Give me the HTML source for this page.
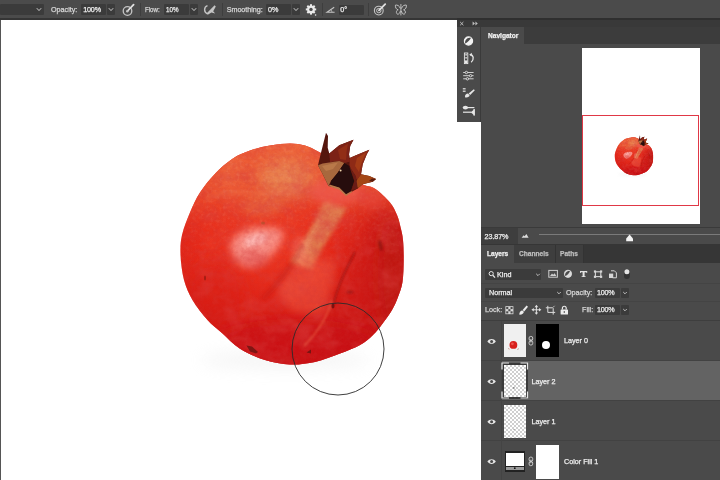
<!DOCTYPE html>
<html><head><meta charset="utf-8"><title>Photoshop</title>
<style>
*{margin:0;padding:0;box-sizing:border-box}
html,body{width:720px;height:480px;overflow:hidden;background:#fff}
body{position:relative;font-family:"Liberation Sans",sans-serif;color:#ddd;font-size:7.2px;-webkit-font-smoothing:antialiased}
.a{position:absolute}
.t{position:absolute;white-space:nowrap;line-height:10px;height:10px;color:#d6d6d6}
.f{position:absolute;background:#3b3b3b;border-radius:1px}
.ck{background-color:#fff;background-image:conic-gradient(#cfcfcf 25%,#fff 0 50%,#cfcfcf 0 75%,#fff 0);background-size:4px 4px}
.b{font-weight:bold;font-size:6.6px;-webkit-text-stroke:0}
.t{-webkit-text-stroke:.25px currentColor}
#root{position:absolute;left:0;top:0;width:720px;height:480px;will-change:transform;transform:translateZ(0)}
</style></head><body><div id="root">

<!-- canvas -->
<div class="a" id="canvas" style="left:0;top:20px;width:481px;height:460px;background:#fff"></div>
<div class="a" style="left:0;top:20px;width:1px;height:460px;background:#555"></div>

<!-- pomegranate -->
<svg class="a" id="fruit" style="left:0;top:0" width="481" height="480" viewBox="0 0 481 480">
<defs>
<radialGradient id="gb" cx="262" cy="235" r="160" gradientUnits="userSpaceOnUse">
<stop offset="0" stop-color="#ee3c24"/><stop offset=".4" stop-color="#e62a1a"/><stop offset=".75" stop-color="#d41e16"/><stop offset="1" stop-color="#c01412"/>
</radialGradient>
<linearGradient id="gv" x1="0" y1="143" x2="0" y2="365" gradientUnits="userSpaceOnUse">
<stop offset="0" stop-color="#f0683c" stop-opacity=".95"/><stop offset=".22" stop-color="#ee5a34" stop-opacity=".75"/><stop offset=".45" stop-color="#e63020" stop-opacity="0"/><stop offset=".7" stop-color="#d41a16" stop-opacity=".35"/><stop offset="1" stop-color="#c81212" stop-opacity=".75"/>
</linearGradient>
<filter id="bl05" x="-20%" y="-20%" width="140%" height="140%"><feGaussianBlur stdDeviation=".55"/></filter>
<filter id="bl1" x="-50%" y="-50%" width="200%" height="200%"><feGaussianBlur stdDeviation="1"/></filter>
<filter id="bl2" x="-50%" y="-50%" width="200%" height="200%"><feGaussianBlur stdDeviation="2"/></filter>
<filter id="bl4" x="-50%" y="-50%" width="200%" height="200%"><feGaussianBlur stdDeviation="4"/></filter>
<filter id="bl8" x="-100%" y="-100%" width="300%" height="300%"><feGaussianBlur stdDeviation="8"/></filter>
<filter id="tex" x="0" y="0" width="100%" height="100%"><feTurbulence type="fractalNoise" baseFrequency=".22" numOctaves="3" seed="7" result="n"/><feColorMatrix in="n" type="matrix" values="0 0 0 0 .62  0 0 0 0 .04  0 0 0 0 .04  1.6 0 0 0 -.62"/></filter>
<filter id="tex3" x="0" y="0" width="100%" height="100%"><feTurbulence type="fractalNoise" baseFrequency=".045 .06" numOctaves="3" seed="11" result="n"/><feColorMatrix in="n" type="matrix" values="0 0 0 0 .7  0 0 0 0 .05  0 0 0 0 .05  0 0 2.4 0 -1.05"/></filter>
<filter id="tex4" x="0" y="0" width="100%" height="100%"><feTurbulence type="fractalNoise" baseFrequency=".05 .04" numOctaves="3" seed="23" result="n"/><feColorMatrix in="n" type="matrix" values="0 0 0 0 1  0 0 0 0 .5  0 0 0 0 .36  2.4 0 0 0 -1.1"/></filter>
<filter id="tex2" x="0" y="0" width="100%" height="100%"><feTurbulence type="fractalNoise" baseFrequency=".3" numOctaves="2" seed="3" result="n"/><feColorMatrix in="n" type="matrix" values="0 0 0 0 1  0 0 0 0 .75  0 0 0 0 .55  0 1.8 0 0 -.82"/></filter>
<linearGradient id="mg" x1="0" y1="138" x2="0" y2="290" gradientUnits="userSpaceOnUse"><stop offset="0" stop-color="#fff"/><stop offset=".5" stop-color="#fff" stop-opacity=".8"/><stop offset="1" stop-color="#fff" stop-opacity="0"/></linearGradient><mask id="mk" maskUnits="userSpaceOnUse" x="170" y="130" width="250" height="250"><rect x="170" y="130" width="250" height="250" fill="url(#mg)"/></mask>
<clipPath id="cb"><path id="bp" d="M290.0,143.5 C295.8,143.5 300.3,144.2 305.0,145.5 C309.7,146.8 313.5,149.1 318.0,151.5 C322.5,153.9 327.0,156.6 332.0,160.0 C337.0,163.4 343.0,168.0 348.0,172.0 C353.0,176.0 357.5,181.2 362.0,184.0 C366.5,186.8 370.3,185.6 375.0,188.7 C379.7,191.8 386.3,198.1 390.0,202.5 C393.7,206.9 395.2,210.9 397.0,215.0 C398.8,219.1 399.5,222.8 400.5,227.0 C401.5,231.2 402.5,234.5 403.0,240.0 C403.5,245.5 403.8,253.0 403.7,260.0 C403.6,267.0 403.4,275.8 402.5,282.0 C401.6,288.2 399.8,292.3 398.0,297.0 C396.2,301.7 394.5,305.7 392.0,310.0 C389.5,314.3 386.2,318.8 383.0,323.0 C379.8,327.2 376.8,331.3 373.0,335.0 C369.2,338.7 365.5,341.9 360.0,345.0 C354.5,348.1 347.5,350.7 340.0,353.5 C332.5,356.3 323.3,360.2 315.0,362.0 C306.7,363.8 298.3,364.8 290.0,364.5 C281.7,364.2 273.3,362.6 265.0,360.0 C256.7,357.4 247.2,353.2 240.0,348.7 C232.8,344.2 227.4,337.8 222.0,333.0 C216.6,328.2 212.4,325.5 207.5,320.0 C202.6,314.5 196.4,306.7 192.5,300.0 C188.6,293.3 186.0,287.5 184.0,280.0 C182.0,272.5 180.8,262.5 180.5,255.0 C180.2,247.5 180.4,242.1 182.0,235.0 C183.6,227.9 187.0,219.6 190.0,212.5 C193.0,205.4 195.8,199.0 200.0,192.5 C204.2,186.0 209.6,179.3 215.0,173.7 C220.4,168.1 226.7,162.6 232.5,158.7 C238.3,154.8 243.8,152.7 250.0,150.5 C256.2,148.3 263.3,146.7 270.0,145.5 C276.7,144.3 284.2,143.5 290.0,143.5Z"/></clipPath>
</defs>
<g id="pom">
<!-- soft shadow -->
<ellipse cx="285" cy="360" rx="85" ry="9" fill="#d8d8d8" opacity=".25" filter="url(#bl8)"/>
<use href="#bp" fill="url(#gb)"/>
<g clip-path="url(#cb)">
<rect x="170" y="130" width="250" height="250" fill="url(#gv)"/>
<!-- tan/yellow top patches -->
<ellipse cx="286" cy="178" rx="30" ry="20" fill="#e89058" opacity=".75" filter="url(#bl8)"/>
<ellipse cx="232" cy="178" rx="20" ry="16" fill="#ec6a40" opacity=".5" filter="url(#bl8)"/>
<ellipse cx="262" cy="206" rx="22" ry="10" fill="#e88450" opacity=".45" filter="url(#bl4)"/>
<!-- tan stripe below crown -->
<path d="M324,200 C317,220 304,240 290,262 L311,270 C322,246 337,226 347,208Z" fill="#e08a56" opacity=".85" filter="url(#bl2)"/><path d="M322,215 C314,232 306,246 297,260" stroke="#f0a070" stroke-width="3" fill="none" opacity=".6" filter="url(#bl2)"/>
<path d="M302,254 L336,262 L330,298 L322,318 L292,312 L276,294Z" fill="#f2604a" opacity=".5" filter="url(#bl4)"/>
<!-- highlight -->
<path d="M231,242 C238,228 262,224 282,230 C288,240 270,262 250,268 C236,264 228,254 231,242Z" fill="#fca8a0" opacity=".8" filter="url(#bl4)"/>
<ellipse cx="256" cy="240" rx="12" ry="6" fill="#ffd0d0" opacity=".6" filter="url(#bl2)" transform="rotate(-20 256 240)"/>
<ellipse cx="300" cy="250" rx="8" ry="14" fill="#fa8a78" opacity=".5" filter="url(#bl4)"/>
<!-- dark right side and bottom -->
<path d="M352,250 C346,275 336,300 330,330 L345,352 L400,320 L410,240 L380,200Z" fill="#c81814" opacity=".5" filter="url(#bl8)"/>
<ellipse cx="392" cy="275" rx="14" ry="60" fill="#b41210" opacity=".5" filter="url(#bl8)"/>
<ellipse cx="295" cy="345" rx="90" ry="26" fill="#c80e12" opacity=".55" filter="url(#bl8)"/>
<ellipse cx="215" cy="300" rx="30" ry="40" fill="#d81c18" opacity=".4" filter="url(#bl8)"/>
<!-- texture -->
<rect x="175" y="138" width="235" height="232" filter="url(#tex3)" opacity=".5"/>
<rect x="175" y="138" width="235" height="232" filter="url(#tex4)" opacity=".06"/>
<rect x="175" y="138" width="235" height="232" filter="url(#tex)" opacity=".3"/>
<g mask="url(#mk)"><rect x="175" y="138" width="235" height="160" filter="url(#tex2)" opacity=".15"/></g>
<!-- crack lines -->
<path d="M355,252 C347,268 338,284 333,306" stroke="#98100e" stroke-width="1.8" fill="none" opacity=".75" filter="url(#bl1)"/>
<path d="M303,245 C294,262 280,282 263,299" stroke="#b41412" stroke-width="3" fill="none" opacity=".5" filter="url(#bl2)"/><path d="M332,300 C328,315 318,332 304,346" stroke="#ee6a4a" stroke-width="2" fill="none" opacity=".5" filter="url(#bl1)"/>
<path d="M205,200 C230,185 262,200 300,190" stroke="#f08a60" stroke-width="3" fill="none" opacity=".35" filter="url(#bl2)"/>
<!-- spots -->
<path d="M246.500,345.500 L252,346.500 L258,352 L256,353.500 L250,351.500Z" fill="#701410" opacity=".85"/>
<path d="M306.500,352.500 L311,349.500 L311,353.500Z" fill="#6a1410" opacity=".85"/>
<ellipse cx="380.500" cy="245.500" rx="1.800" ry="5.500" fill="#8a1210" opacity=".75" transform="rotate(-12 380.500 245.500)" filter="url(#bl1)"/>
<ellipse cx="350" cy="292" rx="3.500" ry="1.500" fill="#8a1210" opacity=".6" filter="url(#bl1)"/>
<ellipse cx="333" cy="306" rx="1.500" ry="2.500" fill="#6a0e0e" opacity=".8"/>
<ellipse cx="205" cy="278" rx="1" ry="2.500" fill="#8a1a10" opacity=".7"/>
<ellipse cx="263" cy="223" rx="2" ry="1.500" fill="#a8502c" opacity=".6"/>
<!-- crown base shading -->
<ellipse cx="336" cy="192" rx="26" ry="14" fill="#ee5a50" opacity=".7" filter="url(#bl4)"/>
<ellipse cx="372" cy="200" rx="14" ry="10" fill="#e84a40" opacity=".5" filter="url(#bl4)"/>
</g>
<!-- crown -->
<g filter="url(#bl05)">
<path d="M318,165.200 L320.200,156 L323.500,142.700 L326,132.700 L328,136 L327.700,147.700 L329.300,153.500 L339.300,145.200 L353.500,139.700 L350.200,146 L349,154.300 L349.700,158 L356,155.200 L369.300,149.700 L366.800,154.300 L362.700,164.300 L361,174.300 L369.300,176 L376,179 L372.700,181.800 L362.700,184.300 L357.700,188.500 L351.800,191.800 L346,195.200 L339.300,188.500 L328.500,186 L322.700,174.300Z" fill="#541610"/>
<path d="M329.300,153.500 L339.300,145.200 L353.500,139.700 L350.200,146 L349,154.300 L349.700,161.800 L344.300,163 L339.300,161 L330,162Z" fill="#7c2416"/>
<path d="M338,150 L348,143.500 L346.500,152 L346,160 L340,159Z" fill="#96301a" opacity=".8"/>
<path d="M349.700,158 L356,155.200 L369.300,149.700 L366.800,154.300 L362.700,164.300 L361,174.300 L357,180 L352,172 L349.500,165Z" fill="#8e2c16"/>
<path d="M357,158 L366,152.500 L361.500,163 L359,172 L355,166Z" fill="#aa3e1a" opacity=".8"/>
<path d="M361,174.300 L369.300,176 L376,179 L372.700,181.800 L362.700,184.300 L357.700,188.500 L355.500,182Z" fill="#a44618"/>
<path d="M372,178.500 L376,179 L372.700,181.800 L369,181Z" fill="#5a1a10"/>
<path d="M318,165.200 L322.700,163.500 L339.300,161 L344.300,163 L337.700,172.700 L331,181 L328.500,186 L322.700,174.300Z" fill="#a8683e"/>
<path d="M322,166 L338,162.500 L333,169 L326,171Z" fill="#c08050" opacity=".7"/>
<path d="M344.300,163 L349.300,166 L354.300,181 L351,191 L346,194.300 L339.300,187.700 L330.200,185.200 L331,181 L337.700,172.700Z" fill="#260a08"/>
<path d="M349.300,166 L356,176 L357.700,188.500 L351,191 L354.300,181Z" fill="#6a1c12"/>
<path d="M328.500,186 L330.200,184.800 L339.300,187.600 L346,194.200 L351.800,191 L351.800,192.200 L346,196 L339,189.500Z" fill="#b8784a"/>
<circle cx="340.600" cy="170.400" r="1" fill="#f0d8b0"/>
</g>
</g>
<!-- brush cursor -->
<circle cx="338" cy="349" r="46" fill="none" stroke="#2a2a2a" stroke-width="0.9"/>
</svg>

<!-- top options bar -->
<div class="a" style="left:0;top:0;width:720px;height:20px;background:#4b4b4b"></div>
<div class="a" style="left:0;top:18px;width:720px;height:2px;background:#353535"></div>
<div id="opts">
<div class="f" style="left:0;top:4px;width:44px;height:11px"></div>
<svg class="a" style="left:36px;top:7px" width="6" height="5" viewBox="0 0 6 5"><path d="M0.8,1.2 L3,3.6 L5.2,1.2" stroke="#ccc" stroke-width="1" fill="none"/></svg>
<div class="t" style="left:51px;top:5px">Opacity:</div>
<div class="f" style="left:81px;top:4px;width:25px;height:11px"></div>
<div class="t" style="left:83.3px;top:5px;color:#eee;letter-spacing:-.22px">100%</div>
<div class="f" style="left:107px;top:4px;width:8px;height:11px"></div>
<svg class="a" style="left:108px;top:7px" width="6" height="5" viewBox="0 0 6 5"><path d="M0.8,1.2 L3,3.6 L5.2,1.2" stroke="#ccc" stroke-width="1" fill="none"/></svg>
<div class="t" style="left:144.7px;top:5px;transform:scaleX(.85);transform-origin:0 0">Flow:</div>
<div class="f" style="left:164px;top:4px;width:25px;height:11px"></div>
<div class="t" style="left:165.8px;top:5px;color:#eee;transform:scaleX(.87);transform-origin:0 0">10%</div>
<div class="f" style="left:190px;top:4px;width:8px;height:11px"></div>
<svg class="a" style="left:191px;top:7px" width="6" height="5" viewBox="0 0 6 5"><path d="M0.8,1.2 L3,3.6 L5.2,1.2" stroke="#ccc" stroke-width="1" fill="none"/></svg>
<div class="t" style="left:226.7px;top:5px;letter-spacing:-.04px">Smoothing:</div>
<div class="f" style="left:266px;top:4px;width:25px;height:11px"></div>
<div class="t" style="left:268px;top:5px;color:#eee">0%</div>
<div class="f" style="left:292px;top:4px;width:8px;height:11px"></div>
<svg class="a" style="left:293px;top:7px" width="6" height="5" viewBox="0 0 6 5"><path d="M0.8,1.2 L3,3.6 L5.2,1.2" stroke="#ccc" stroke-width="1" fill="none"/></svg>
<div class="f" style="left:339px;top:5px;width:25px;height:10px"></div>
<div class="t" style="left:340.2px;top:5px;color:#eee">0°</div>
</div>

<!-- right dock -->
<div class="a" style="left:457px;top:18px;width:263px;height:2px;background:#2f2f2f"></div><div class="a" style="left:457px;top:20px;width:263px;height:7px;background:#393939"></div>
<div class="a" style="left:457px;top:27px;width:24px;height:95px;background:#4a4a4a"></div>
<div class="a" style="left:481px;top:27px;width:239px;height:453px;background:#4a4a4a"></div>
<div class="a" style="left:480px;top:27px;width:1px;height:95px;background:#3a3a3a"></div>
<!-- navigator tab bar -->
<div class="a" style="left:524px;top:27px;width:196px;height:17px;background:#3c3c3c"></div>
<div class="t b" style="left:488px;top:31px;color:#f0f0f0">Navigator</div>
<!-- navigator preview -->
<div class="a" style="left:582px;top:48px;width:118px;height:176px;background:#fff"></div>
<svg class="a" style="left:582px;top:48px" width="118" height="176" viewBox="582 48 118 176"><use href="#pom" transform="translate(583.7,112.65) scale(.172)"/></svg>
<div class="a" style="left:582px;top:115px;width:117px;height:91px;border:1.2px solid #e03846"></div>

<!-- zoom bar -->
<div class="a" style="left:481px;top:227px;width:239px;height:1px;background:#3a3a3a"></div>
<div class="a" style="left:481px;top:228px;width:37px;height:16px;background:#3e3e3e"></div>
<div class="t" style="left:484.6px;top:232px;color:#eee;letter-spacing:-.1px">23.87%</div>
<div class="a" style="left:539px;top:233.5px;width:181px;height:1px;background:#7a7a7a"></div>
<!-- layers tab bar -->
<div class="a" style="left:481px;top:244px;width:239px;height:19px;background:#363636"></div><div class="a" style="left:514px;top:245px;width:69px;height:18px;background:#3e3e3e"></div><div class="a" style="left:554.5px;top:245px;width:1px;height:18px;background:#333"></div><div class="a" style="left:583px;top:245px;width:1px;height:18px;background:#333"></div>
<div class="a" style="left:481px;top:245px;width:33px;height:18px;background:#4a4a4a"></div>
<div class="t b" style="left:487px;top:249px;color:#f0f0f0">Layers</div>
<div class="t b" style="left:519px;top:249px;color:#bdbdbd">Channels</div>
<div class="t b" style="left:560px;top:249px;color:#bdbdbd">Paths</div>
<!-- kind row -->
<div class="f" style="left:485px;top:269px;width:56px;height:11px"></div>
<div class="t" style="left:497px;top:270px;color:#eee">Kind</div>
<div class="a" style="left:481px;top:283px;width:239px;height:1px;background:#444"></div>
<div class="f" style="left:485px;top:288px;width:78px;height:10px"></div>
<div class="t" style="left:489px;top:288px;color:#eee">Normal</div>
<div class="t" style="left:566px;top:288px">Opacity:</div>
<div class="f" style="left:595px;top:288px;width:25px;height:10px"></div>
<div class="t" style="left:597px;top:288px;color:#eee;letter-spacing:-.22px">100%</div>
<div class="f" style="left:621px;top:288px;width:8px;height:10px"></div>
<div class="a" style="left:481px;top:301px;width:239px;height:1px;background:#444"></div>
<div class="t" style="left:485px;top:305px">Lock:</div>
<div class="t" style="left:582px;top:305px">Fill:</div>
<div class="f" style="left:595px;top:305px;width:25px;height:10px"></div>
<div class="t" style="left:597px;top:305px;color:#eee;letter-spacing:-.22px">100%</div>
<div class="f" style="left:621px;top:305px;width:8px;height:10px"></div>

<!-- layers -->
<div class="a" style="left:481px;top:320px;width:239px;height:1px;background:#3e3e3e"></div>
<div class="a" style="left:501px;top:361px;width:219px;height:39px;background:#636363"></div>
<div class="a" style="left:481px;top:360px;width:239px;height:1px;background:#424242"></div>
<div class="a" style="left:481px;top:400px;width:239px;height:1px;background:#424242"></div>
<div class="a" style="left:481px;top:440px;width:239px;height:1px;background:#424242"></div>
<div class="a" style="left:501px;top:321px;width:1px;height:159px;background:#444"></div>
<!-- layer 0 -->
<div class="a" style="left:503.5px;top:323.7px;width:22.6px;height:33.8px;background:#f0f0f0"></div>
<div class="a" style="left:536.3px;top:323.7px;width:22.5px;height:33.8px;background:#000"></div>
<div class="a" style="left:542.3px;top:341px;width:7.8px;height:7.8px;border-radius:50%;background:#fff"></div>
<div class="t" style="left:564px;top:336px;color:#eee">Layer 0</div>
<!-- layer 2 -->
<div class="a" style="left:501.5px;top:362.5px;width:26.5px;height:36px;background:#3a3a3a"></div><div class="a ck" style="left:503.5px;top:364.5px;width:22.5px;height:32.5px"></div>
<div class="t" style="left:531.5px;top:376.5px;color:#eee">Layer 2</div>
<!-- layer 1 -->
<div class="a ck" style="left:503.5px;top:405px;width:22.5px;height:33px"></div>
<div class="t" style="left:531.5px;top:416.5px;color:#eee">Layer 1</div>
<!-- color fill -->
<div class="a" style="left:504.5px;top:451px;width:20.5px;height:20.5px;background:#222"></div>
<div class="a" style="left:506px;top:452.5px;width:17.5px;height:13px;background:#fff"></div>
<div class="a" style="left:506px;top:466.5px;width:17.5px;height:3.5px;background:#9a9a9a"></div>
<div class="a" style="left:536px;top:445px;width:23px;height:33.5px;background:#fff"></div>
<div class="t" style="left:564px;top:456.5px;color:#eee">Color Fill 1</div>


<!-- ICONS -->
<svg class="a" id="icons" style="left:0;top:0;pointer-events:none" width="720" height="480" viewBox="0 0 720 480">
<g fill="none" stroke="#c4c4c4" stroke-width="1">
<!-- separators in options bar -->
<g stroke="#3e3e3e" stroke-width="1"><path d="M140.5,3V16M222.5,3V16M322.5,3V16M368.5,3V16"/></g>
<!-- pressure opacity -->
<circle cx="127.5" cy="11" r="4.3" stroke-width="1.3"/>
<path d="M127.5,11 L133.6,4.6" stroke="#e0e0e0" stroke-width="1.8" stroke-linecap="round"/>
<circle cx="127.3" cy="11.2" r="1.2" fill="#c4c4c4" stroke="none"/>
<!-- airbrush -->
<path d="M207.5,5.6 C203.6,7 203.6,12.6 207.8,14" stroke-width="1.4"/>
<path d="M206.5,13.6 L214.6,5.2 L215.8,6.6 L213.2,11.2 L215.2,13.4 L211.4,12.6 L208.2,14.6Z" fill="#c4c4c4" stroke="none"/>
<!-- gear -->
<g stroke="none" fill="#eaeaea"><circle cx="311" cy="9.4" r="3.9"/>
<g id="teeth"><rect x="310" y="4.2" width="2" height="10.4"/><rect x="305.8" y="8.4" width="10.4" height="2"/></g>
<use href="#teeth" transform="rotate(45 311 9.4)"/>
<circle cx="311" cy="9.4" r="1.7" fill="#4b4b4b"/>
<circle cx="315.6" cy="15" r=".8"/></g>
<!-- angle -->
<path d="M334.2,7.2 L327,12.2 H334.6" stroke-width="1.1"/><path d="M330.6,9.6 C331.6,10.4 331.9,11.2 331.9,12.2" stroke-width=".9"/>
<!-- pressure size -->
<circle cx="378.8" cy="10.6" r="4.4" stroke-width="1.1"/><circle cx="378.8" cy="10.6" r="2.2" stroke-width="1"/>
<path d="M379,10.4 L385.2,4.2" stroke="#e0e0e0" stroke-width="1.8" stroke-linecap="round"/>
<!-- butterfly -->
<path d="M400.9,4V15.4" stroke-width=".9"/>
<path d="M400.4,8.6 C399.6,5.6 396.8,4.6 395.4,5.2 C395.2,7.4 396.2,9.4 398.2,9.8 C396,10.2 395.8,13.4 397.6,14.2 C399.2,14.2 400.2,12.6 400.4,10.8" stroke-width="1"/>
<path d="M401.4,8.6 C402.2,5.6 405,4.6 406.4,5.2 C406.6,7.4 405.6,9.4 403.6,9.8 C405.8,10.2 406,13.4 404.2,14.2 C402.6,14.2 401.6,12.6 401.4,10.8" stroke-width="1"/>
</g>
<!-- dock header -->
<g stroke="#bdbdbd" stroke-width="1" fill="none"><path d="M460.2,22 L463.4,25.2 M463.4,22 L460.2,25.2"/></g>
<g fill="#bdbdbd"><path d="M472.6,21.6 L475,23.6 L472.6,25.6Z M475.4,21.6 L477.8,23.6 L475.4,25.6Z"/></g>
<!-- tool strip icons -->
<g>
<circle cx="468.5" cy="41" r="4.1" fill="#f2f2f2" stroke="#f2f2f2" stroke-width="1.2"/>
<path d="M465.2,43.4 C464.4,40.4 467,36.8 471,37.8 C470,40 467.6,42.6 465.2,43.4Z" fill="#4a4a4a"/>
<!-- history -->
<g fill="#e8e8e8"><rect x="464.4" y="53" width="3.4" height="10.6" fill="none" stroke="#e8e8e8" stroke-width=".9"/><rect x="465" y="60.4" width="2.4" height="2.6"/><rect x="465.2" y="54" width="2" height="1.6" fill="#bbb"/><rect x="465.2" y="57" width="2" height="1.6" fill="#bbb"/></g>
<path d="M470,54.6 C473.6,54.6 474.4,59.6 471.2,62.2" fill="none" stroke="#e8e8e8" stroke-width="1.3"/><path d="M469.2,54.8 L471.8,52.8 L471.8,56.6Z" fill="#e8e8e8"/>
<!-- sliders -->
<g stroke="#e0e0e0" stroke-width=".9" fill="#4a4a4a"><path d="M463.2,72.5H473.6M463.2,75.7H473.6M463.2,78.8H473.6"/><circle cx="466.4" cy="72.5" r="1.2"/><circle cx="470.6" cy="75.7" r="1.2"/><circle cx="467.4" cy="78.8" r="1.2"/></g>
<!-- brush settings -->
<g fill="#e6e6e6"><path d="M465,97.2 C464.8,95 466.2,93.6 468,93.6 L469.6,95.2 C469.4,96.8 467.4,97.8 465,97.2Z"/><path d="M468.6,93.4 L473.8,89.2 L474.8,90.2 L470.2,95Z"/>
<rect x="462.8" y="88" width="2.8" height=".8"/><rect x="462.8" y="89.6" width="2.8" height=".8"/><rect x="462.8" y="91.2" width="2.8" height=".8"/></g>
<!-- brushes -->
<g fill="#e6e6e6"><ellipse cx="465.4" cy="107.6" rx="2.6" ry="1.9"/><rect x="467" y="107" width="7.4" height="1.2"/>
<rect x="463" y="111.6" width="8" height="1.2"/><path d="M470.6,112.2 L474.6,109.2 V115.4Z"/><rect x="473.4" y="109" width="1.4" height="6.6"/></g>
</g>
<!-- zoom bar -->
<path d="M521.6,237.8 H528.6 L526.4,234 L524.6,236.2 L523.6,235.2 Z" fill="#dcdcdc"/>
<path d="M629.6,234.6 L633,238.4 V241.2 H626.2 V238.4Z" fill="#f4f4f4"/>
<!-- kind row -->
<g fill="none" stroke="#e6e6e6"><circle cx="491.2" cy="273.6" r="2.1" stroke-width="1"/><path d="M492.8,275.2 L495,277.6" stroke-width="1.3"/>
<path d="M536.2,273.8 L538,275.6 L539.8,273.8" stroke="#ccc" stroke-width=".9"/></g>
<g>
<rect x="548.8" y="270.4" width="8.6" height="6.8" fill="none" stroke="#cfcfcf" stroke-width="1"/><path d="M550,276 L552,273.4 L553.2,274.8 L554.6,273.2 L556.4,276Z" fill="#cfcfcf"/>
<circle cx="568" cy="273.8" r="3.6" fill="#dcdcdc" stroke="#dcdcdc" stroke-width=".9"/><path d="M565.2,276 C564.4,273.4 566.6,270.4 570,271 C569.4,273.2 567.4,275.4 565.2,276Z" fill="#4a4a4a"/>
<path d="M580,271 H587.2 V273 H586.4 V272.2 H584.6 V276.2 H585.6 V277.1 H581.6 V276.2 H582.6 V272.2 H580.8 V273 H580Z" fill="#e2e2e2"/>
<rect x="595.4" y="271.8" width="5.4" height="4.8" fill="none" stroke="#d6d6d6" stroke-width="1.1"/><g fill="#d6d6d6"><rect x="593.9" y="270.4" width="2.2" height="2.2"/><rect x="600" y="270.4" width="2.2" height="2.2"/><rect x="593.9" y="275.7" width="2.2" height="2.2"/><rect x="600" y="275.7" width="2.2" height="2.2"/></g>
<path d="M611,270.8 H614.4 L616.4,272.8 V277.8 H612.6" fill="none" stroke="#d6d6d6" stroke-width="1"/><rect x="609" y="273.6" width="4.2" height="4.4" fill="#d6d6d6"/>
<rect x="624" y="269.2" width="5.8" height="9.8" rx="2.9" fill="#333"/><circle cx="626.9" cy="271.8" r="2.5" fill="#e4e4e4"/>
</g>
<!-- dropdown arrows in layers -->
<g fill="none" stroke="#ccc" stroke-width=".9"><path d="M557.2,292 L559,293.8 L560.8,292"/><path d="M623.2,292 L625,293.8 L626.8,292"/><path d="M623.2,309 L625,310.8 L626.8,309"/></g>
<!-- lock icons -->
<g>
<rect x="505.4" y="306.2" width="8" height="8" fill="#d8d8d8"/><g fill="#4a4a4a"><rect x="506.2" y="307" width="2.1" height="2.1"/><rect x="510.5" y="307" width="2.1" height="2.1"/><rect x="508.35" y="309.15" width="2.1" height="2.1"/><rect x="506.2" y="311.3" width="2.1" height="2.1"/><rect x="510.5" y="311.3" width="2.1" height="2.1"/></g>
<path d="M519.2,314.6 C519.4,312 520.4,310.6 522.4,310.4 L523.8,311.8 C523.6,313.8 522,314.8 519.2,314.6Z" fill="#ececec"/><path d="M522.6,310 L526.6,305.6 L528,306.8 L524.2,311.4Z" fill="#ececec"/>
<g stroke="#e0e0e0" stroke-width="1" fill="#e0e0e0"><path d="M536.4,306.4V313.2M533,309.8H539.8" fill="none"/><path d="M536.4,304.8 L538.2,307.2 H534.6Z M536.4,314.8 L538.2,312.4 H534.6Z M531.4,309.8 L533.8,308 V311.6Z M541.4,309.8 L539,308 V311.6Z" stroke="none"/></g>
<g fill="none" stroke="#dcdcdc" stroke-width="1"><path d="M547.8,305.8 V312.4 H555.2 M545.8,307.8 H552.6 L553.2,308.4 V314.6"/><path d="M552.8,307.6 L554.6,305.8" stroke-width=".8"/></g>
<rect x="560.6" y="309.4" width="7.4" height="5.2" rx=".6" fill="#ececec"/><path d="M562.4,309.6 V308.2 C562.4,305.6 566.2,305.6 566.2,308.2 V309.6" fill="none" stroke="#ececec" stroke-width="1.2"/><rect x="563.7" y="311.2" width="1.2" height="1.6" fill="#4a4a4a"/>
</g>

<!-- thumb details -->
<circle cx="513.4" cy="344.9" r="3.9" fill="#d8201c"/><circle cx="512.4" cy="343.8" r="1.4" fill="#f0605a" opacity=".8"/>
<path d="M508,348.4 L509.6,349.2 M517.2,349.6 L519,348.6" stroke="#c08070" stroke-width=".8" opacity=".8"/>
<circle cx="513.9" cy="387.9" r=".7" fill="#444"/>
<circle cx="514" cy="429.5" r=".5" fill="#777"/>
<g fill="none" stroke="#e6e6e6" stroke-width="1.2"><path d="M502,369.5 V363 H509 M520.5,363 H527.5 V369.5 M527.5,391.5 V398 H520.5 M509,398 H502 V391.5"/></g>
<circle cx="514.8" cy="468.2" r=".9" fill="#111"/>
<!-- eyes -->
<g id="eye"><path d="M487.4,341.4 C489.4,338.2 493.8,338.2 495.8,341.4 C493.8,344.6 489.4,344.6 487.4,341.4Z" fill="#e8e8e8"/><circle cx="491.6" cy="341.4" r="1.5" fill="#4a4a4a"/></g>
<use href="#eye" y="40.2"/><use href="#eye" y="80.4"/><use href="#eye" y="120.2"/>
<!-- chain links -->
<g id="chain" fill="none" stroke="#d4d4d4" stroke-width=".9"><rect x="529.1" y="336.4" width="3.6" height="4.2" rx="1.6"/><rect x="529.1" y="340.8" width="3.6" height="4.2" rx="1.6"/><path d="M530.9,339 V342.4" stroke-width="1"/></g>
<use href="#chain" y="120.7"/>
</svg>
</div></body></html>
